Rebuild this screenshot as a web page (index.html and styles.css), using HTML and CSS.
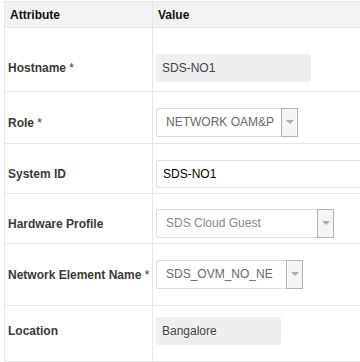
FILE: index.html
```html
<!DOCTYPE html>
<html lang="en">
<head>
  <meta charset="UTF-8" />
  <title>Server Attributes</title>
  <link rel="stylesheet" href="styles.css">
</head>
<body>
  <table class="attr-table">
    <thead>
      <tr>
        <th class="col-attr">Attribute</th>
        <th>Value</th>
      </tr>
    </thead>
    <tbody>
      <tr class="row-host">
        <td class="label">Hostname <span class="req">*</span></td>
        <td><div class="field readonly w-host">SDS-NO1</div></td>
      </tr>
      <tr class="row-role">
        <td class="label">Role <span class="req">*</span></td>
        <td>
          <div class="combo w-role">
            <span class="combo-text">NETWORK OAM&amp;P</span>
            <span class="combo-btn"><i class="arrow"></i></span>
          </div>
        </td>
      </tr>
      <tr class="row-sysid">
        <td class="label">System ID</td>
        <td><div class="field editable w-sysid">SDS-NO1</div></td>
      </tr>
      <tr class="row-hw">
        <td class="label">Hardware Profile</td>
        <td>
          <div class="combo w-hw">
            <span class="combo-text light">SDS Cloud Guest</span>
            <span class="combo-btn"><i class="arrow"></i></span>
          </div>
        </td>
      </tr>
      <tr class="row-ne">
        <td class="label">Network Element Name <span class="req">*</span></td>
        <td>
          <div class="combo w-ne">
            <span class="combo-text">SDS_OVM_NO_NE</span>
            <span class="combo-btn"><i class="arrow"></i></span>
          </div>
        </td>
      </tr>
      <tr class="row-loc">
        <td class="label">Location</td>
        <td><div class="field readonly w-loc">Bangalore</div></td>
      </tr>
    </tbody>
  </table>
</body>
</html>
```

FILE: styles.css
```css
* {
  box-sizing: border-box;
}
body {
  margin: 0;
  padding: 1px 0 0 4px;
  font-family: 'Liberation Sans', Arial, sans-serif;
  font-size: 12px;
  color: #333;
  background: #fff;
  overflow: hidden;
}
.attr-table {
  border-collapse: collapse;
  table-layout: fixed;
  width: 356px;
}
.attr-table th,
.attr-table td {
  border: 1px solid #e6e6e6;
  white-space: nowrap;
}
.attr-table th:last-child,
.attr-table td:last-child {
  border-right: 0;
}
.attr-table th {
  background: #f2f2f2;
  text-align: left;
  font-weight: bold;
  color: #111;
  height: 26px;
  padding: 1px 5px 0;
}
.col-attr {
  width: 148px;
}
.attr-table td {
  padding: 0 3px;
  vertical-align: middle;
}
.label {
  font-weight: bold;
  color: #3a3a3a;
}
.req {
  font-weight: normal;
}
.row-host td { padding-top: 26px; padding-bottom: 9px; }
.row-role td { padding-top: 16px; padding-bottom: 6px; }
.row-sysid td { padding-top: 16px; padding-bottom: 5px; }
.row-hw td { padding-top: 15px; padding-bottom: 5px; }
.row-ne td { padding-top: 16px; padding-bottom: 16px; }
.row-loc td { padding-top: 11px; padding-bottom: 16px; }

.field {
  height: 28px;
  line-height: 28px;
  padding-left: 6px;
  border-radius: 2px;
}
.readonly {
  background: #efeff1;
  color: #444;
}
.editable {
  background: #fff;
  border: 1px solid #e0e0e0;
  line-height: 26px;
  color: #000;
}
.w-host { width: 155px; }
.w-sysid {
  width: 204px;
  border-right: 0;
  border-radius: 2px 0 0 2px;
}
.w-loc { width: 125px; }

.combo {
  display: flex;
  align-items: stretch;
  height: 29px;
  background: #fff;
  border: 1px solid #dedede;
  border-radius: 2px;
}
.combo-text {
  flex: 1;
  line-height: 27px;
  padding-left: 9px;
  color: #6a6a6a;
}
.combo-text.light {
  color: #888;
}
.combo-btn {
  width: 17px;
  border: 1px solid #b4b4b4;
  background: #f5f5f5;
  margin: -1px -1px -1px 0;
  display: flex;
  align-items: center;
  justify-content: center;
}
.arrow {
  width: 0;
  height: 0;
  border-left: 4px solid transparent;
  border-right: 4px solid transparent;
  border-top: 4px solid #aaa;
  margin-top: -2px;
}
.w-role { width: 142px; }
.w-hw { width: 178px; }
.w-ne { width: 147px; }
```
